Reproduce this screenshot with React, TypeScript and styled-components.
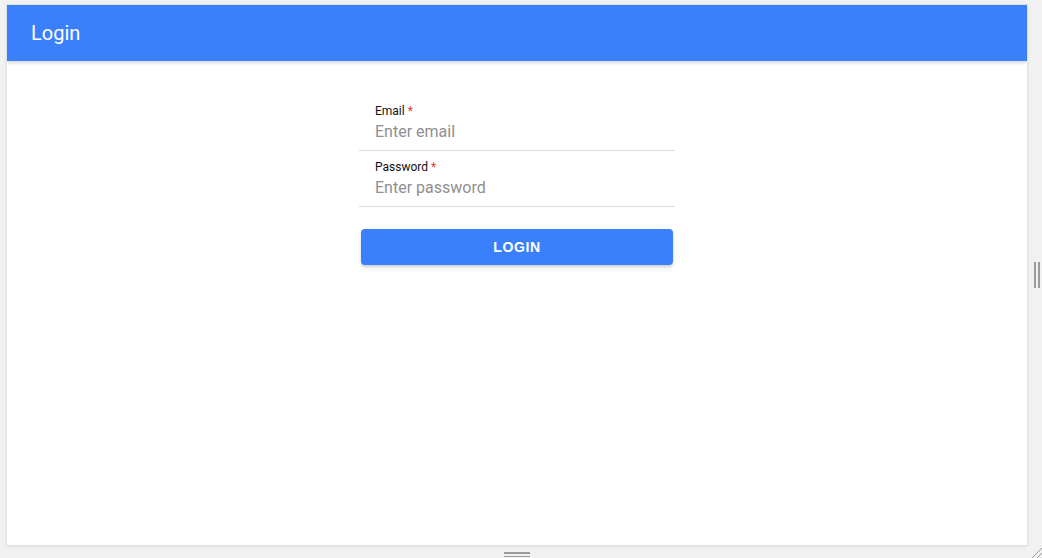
import React from 'react'
import styled, { createGlobalStyle } from 'styled-components'

const GlobalStyle = createGlobalStyle`
  html, body {
    margin: 0;
    padding: 0;
    background: #f1f1f1;
    font-family: Roboto, "Liberation Sans", Arial, sans-serif;
  }
`

const Frame = styled.div`
  display: grid;
  grid-template-columns: 1020px 15px;
  grid-template-rows: 540px 13px;
  padding: 5px 0 0 7px;
`

const Panel = styled.div`
  background: #ffffff;
  box-shadow: 0 0 0 1px #e2e2e2, 0 1px 3px rgba(0, 0, 0, 0.12);
  display: flex;
  flex-direction: column;
  overflow: hidden;
`

const AppBar = styled.header`
  height: 56px;
  background: #3a80fd;
  display: flex;
  align-items: center;
  padding: 0 24px;
  box-shadow: 0 2px 3px rgba(0, 0, 0, 0.15);
  flex-shrink: 0;
`

const Title = styled.h1`
  margin: 0;
  color: #ffffff;
  font-size: 20px;
  font-weight: 400;
  line-height: 1;
`

const Content = styled.main`
  flex: 1;
  display: flex;
  justify-content: center;
  padding-top: 34px;
`

const Form = styled.form`
  width: 316px;
  display: flex;
  flex-direction: column;
`

const Field = styled.label`
  height: 56px;
  box-sizing: border-box;
  padding: 9px 16px 0;
  border-bottom: 1px solid #dcdcdc;
  display: flex;
  flex-direction: column;
`

const FieldLabel = styled.span`
  font-size: 12px;
  line-height: 14px;
  color: #111111;
`

const Required = styled.span`
  color: #e53935;
  margin-left: 3px;
`

const Input = styled.input`
  margin-top: 4px;
  border: 0;
  outline: none;
  padding: 0;
  font-family: inherit;
  font-size: 16px;
  line-height: 20px;
  height: 20px;
  color: #333333;
  background: transparent;
  &::placeholder {
    color: #8f8f8f;
  }
`

const Button = styled.button`
  margin: 22px 2px 0;
  height: 36px;
  border: 0;
  border-radius: 4px;
  background: #3a80fd;
  color: #ffffff;
  font-family: "Liberation Sans", Arial, sans-serif;
  font-size: 14px;
  font-weight: 700;
  letter-spacing: 0.6px;
  box-shadow: 0 2px 3px rgba(0, 0, 0, 0.2);
  cursor: pointer;
`

const SideGutter = styled.div`
  display: flex;
  align-items: center;
  justify-content: flex-end;
  padding-right: 2px;
`

const VGrip = styled.div`
  width: 6px;
  height: 26px;
  border-left: 2px solid #9a9a9a;
  border-right: 2px solid #9a9a9a;
  box-sizing: border-box;
`

const BottomGutter = styled.div`
  display: flex;
  justify-content: center;
  align-items: flex-end;
  padding-bottom: 1px;
`

const HGrip = styled.div`
  width: 26px;
  height: 5px;
  border-top: 2px solid #9a9a9a;
  border-bottom: 1px solid #9a9a9a;
  box-sizing: border-box;
`

const Corner = styled.div`
  display: flex;
  align-items: flex-end;
  justify-content: flex-end;
`

const Field_ = ({ label, placeholder, type }: { label: string; placeholder: string; type: string }) => (
  <Field>
    <FieldLabel>
      {label}
      <Required>*</Required>
    </FieldLabel>
    <Input type={type} placeholder={placeholder} />
  </Field>
)

const App: React.FC = () => (
  <>
    <GlobalStyle />
    <Frame>
      <Panel>
        <AppBar>
          <Title>Login</Title>
        </AppBar>
        <Content>
          <Form onSubmit={e => e.preventDefault()}>
            <Field_ label='Email' placeholder='Enter email' type='email' />
            <Field_ label='Password' placeholder='Enter password' type='password' />
            <Button type='submit'>LOGIN</Button>
          </Form>
        </Content>
      </Panel>
      <SideGutter>
        <VGrip />
      </SideGutter>
      <BottomGutter>
        <HGrip />
      </BottomGutter>
      <Corner>
        <svg width='11' height='11' viewBox='0 0 11 11'>
          <line x1='1' y1='11' x2='11' y2='1' stroke='#9a9a9a' strokeWidth='1' />
          <line x1='6' y1='11' x2='11' y2='6' stroke='#9a9a9a' strokeWidth='1' />
        </svg>
      </Corner>
    </Frame>
  </>
)

export default App
